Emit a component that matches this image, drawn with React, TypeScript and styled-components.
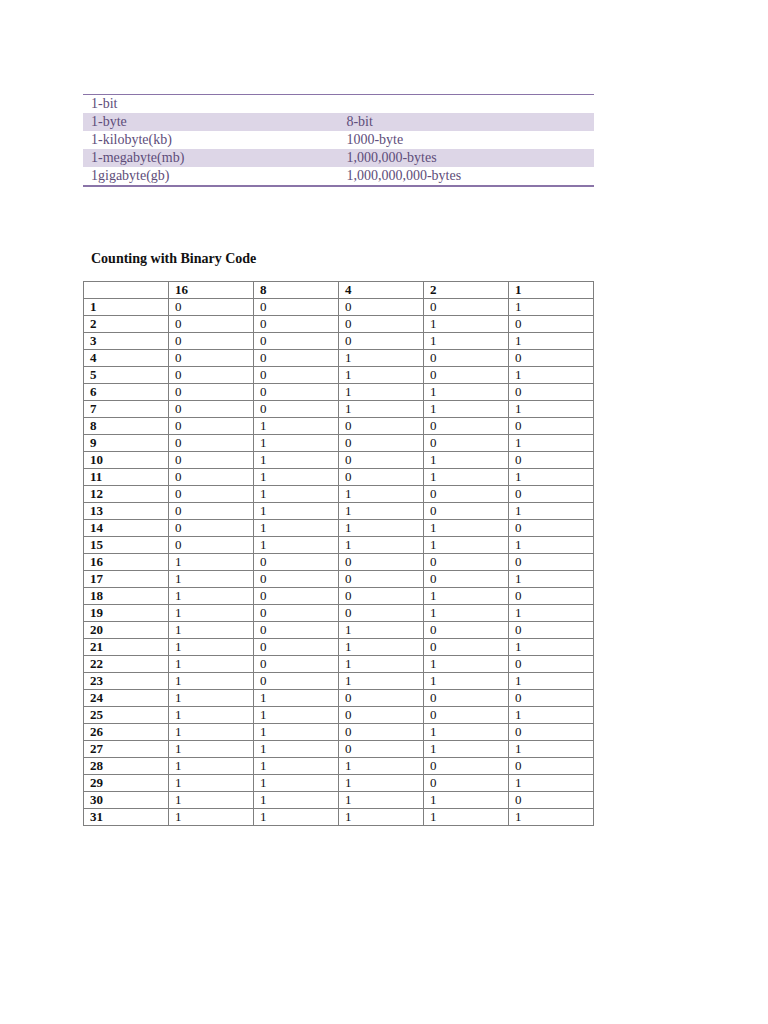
import styled, { createGlobalStyle } from "styled-components";

const GlobalStyle = createGlobalStyle`
  html, body {
    margin: 0;
    padding: 0;
    background: #ffffff;
  }
`;

const Page = styled.div`
  width: 768px;
  height: 1024px;
  padding: 94px 0 0 83px;
  box-sizing: border-box;
  font-family: "Liberation Serif", "DejaVu Serif", serif;
`;

const UnitTable = styled.table`
  width: 511px;
  border-collapse: collapse;
  border-top: 1px solid #8a74a8;
  border-bottom: 2px solid #8a74a8;
  font-size: 14px;
  color: #5e4d7a;
`;

const UnitRow = styled.tr<{ $shaded: boolean }>`
  height: 18px;
  background: ${(p) => (p.$shaded ? "#ddd6e7" : "transparent")};
`;

const UnitCell = styled.td`
  padding: 0 0 0 8px;
  width: 255px;
  line-height: 18px;
`;

const Heading = styled.h3`
  margin: 64px 0 14px 8px;
  font-size: 14px;
  line-height: 16px;
  font-weight: bold;
  color: #111;
`;

const BinaryTable = styled.table`
  width: 511px;
  table-layout: fixed;
  border-collapse: collapse;
  font-size: 13px;
  color: #111;
`;

const Cell = styled.td<{ $bold?: boolean }>`
  height: 17px;
  padding: 0 0 0 6px;
  box-sizing: border-box;
  border: 1px solid #7f7f7f;
  line-height: 16px;
  font-weight: ${(p) => (p.$bold ? "bold" : "normal")};
`;

const units = [
  ["1-bit", ""],
  ["1-byte", "8-bit"],
  ["1-kilobyte(kb)", "1000-byte"],
  ["1-megabyte(mb)", "1,000,000-bytes"],
  ["1gigabyte(gb)", "1,000,000,000-bytes"],
];

const places = [16, 8, 4, 2, 1];

function App() {
  const rows = Array.from({ length: 31 }, (_, i) => i + 1);

  return (
    <Page>
      <GlobalStyle />
      <UnitTable>
        <tbody>
          {units.map((u, i) => (
            <UnitRow key={i} $shaded={i % 2 === 1}>
              <UnitCell>{u[0]}</UnitCell>
              <UnitCell>{u[1]}</UnitCell>
            </UnitRow>
          ))}
        </tbody>
      </UnitTable>

      <Heading>Counting with Binary Code</Heading>

      <BinaryTable>
        <tbody>
          <tr>
            <Cell $bold></Cell>
            {places.map((p) => (
              <Cell key={p} $bold>
                {p}
              </Cell>
            ))}
          </tr>
          {rows.map((n) => (
            <tr key={n}>
              <Cell $bold>{n}</Cell>
              {places.map((p) => (
                <Cell key={p}>{n & p ? 1 : 0}</Cell>
              ))}
            </tr>
          ))}
        </tbody>
      </BinaryTable>
    </Page>
  );
}

export default App;
